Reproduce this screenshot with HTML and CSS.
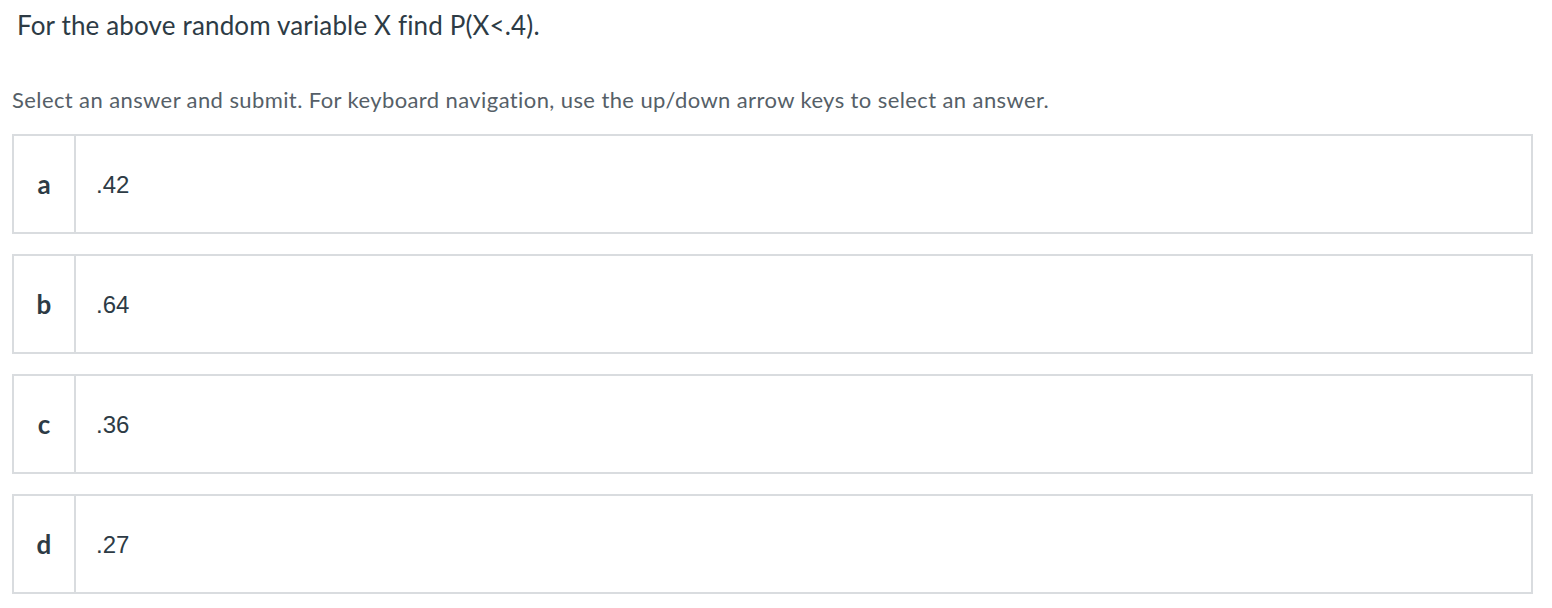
FILE: index.html
```html
<!DOCTYPE html>
<html lang="en">
<head>
  <meta charset="UTF-8" />
  <title>Question</title>
  <link rel="stylesheet" href="styles.css">
</head>
<body>
  <div class="question">
    <p class="question-text">For the above random variable X find P(X&lt;.4).</p>

    <p class="instructions">Select an answer and submit. For keyboard navigation, use the up/down arrow keys to select an answer.</p>

    <div class="answers">
      <div class="answer">
        <span class="answer-letter">a</span>
        <span class="answer-value">.42</span>
      </div>
      <div class="answer">
        <span class="answer-letter">b</span>
        <span class="answer-value">.64</span>
      </div>
      <div class="answer">
        <span class="answer-letter">c</span>
        <span class="answer-value">.36</span>
      </div>
      <div class="answer">
        <span class="answer-letter">d</span>
        <span class="answer-value">.27</span>
      </div>
    </div>
  </div>
</body>
</html>
```

FILE: styles.css
```css
body {
  margin: 0;
  padding: 0 19px 0 12px;
  background: #fff;
  color: #2d3b45;
  font-family: Lato, 'Noto Sans', sans-serif;
  font-variant-ligatures: none;
}

.question-text {
  margin: 0;
  padding: 8px 0 0 5px;
  font-size: 26px;
  line-height: 34px;
  letter-spacing: 0.15px;
  color: #2d3b45;
}

.instructions {
  margin: 44px 0 0;
  font-size: 22px;
  line-height: 28px;
  letter-spacing: 0.4px;
  color: #565f68;
}

.answers {
  display: flex;
  flex-direction: column;
  gap: 20px;
  margin-top: 20px;
}

/* each answer row: letter cell + value cell */
.answer {
  display: flex;
  align-items: stretch;
  height: 96px;
  border: 2px solid #d9dcdf;
  background: #fff;
  cursor: pointer;
}

.answer-letter {
  display: flex;
  align-items: center;
  justify-content: center;
  width: 60px;
  border-right: 2px solid #d9dcdf;
  font-size: 26px;
  font-weight: 700;
  color: #2d3b45;
}

.answer-value {
  display: flex;
  align-items: center;
  padding: 1px 0 0 20px;
  font-family: 'Liberation Sans', Arial, sans-serif;
  font-size: 24px;
  color: #2d3b45;
}
```
